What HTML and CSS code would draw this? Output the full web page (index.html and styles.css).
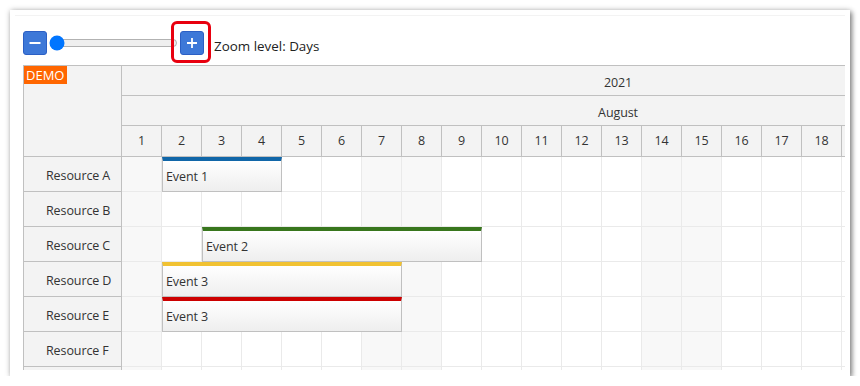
FILE: index.html
```html
<!DOCTYPE html>
<html>
<head>
<meta charset="utf-8">
<link rel="stylesheet" href="styles.css">
</head>
<body>
<div class="frame">
  <div class="inner">
    <div class="toolbar">
      <button class="zbtn" aria-label="Zoom out"><svg width="24" height="24" viewBox="0 0 24 24"><path d="M6.5 12h11" stroke="#fff" stroke-width="2"/></svg></button>
      <input class="slider" type="range" min="0" max="5" value="0">
      <button class="zbtn" aria-label="Zoom in"><svg width="24" height="24" viewBox="0 0 24 24"><path d="M7 12h10M12 7v10" stroke="#fff" stroke-width="1.8"/></svg></button>
      <span class="zlabel">Zoom level: Days</span>
      <div class="highlight"></div>
    </div>
    <div class="scheduler">
      <div class="left">
        <div class="corner"><span class="demo">DEMO</span></div>
        <div class="rh">Resource A</div>
        <div class="rh">Resource B</div>
        <div class="rh">Resource C</div>
        <div class="rh">Resource D</div>
        <div class="rh">Resource E</div>
        <div class="rh">Resource F</div>
        <div class="rh"></div>
      </div>
      <div class="timeline">
        <div class="th th-group"><div class="th-wide">2021</div></div>
        <div class="th th-group"><div class="th-wide">August</div></div>
        <div class="th th-days">
          <div class="day">1</div><div class="day">2</div><div class="day">3</div><div class="day">4</div><div class="day">5</div><div class="day">6</div><div class="day">7</div><div class="day">8</div><div class="day">9</div><div class="day">10</div><div class="day">11</div><div class="day">12</div><div class="day">13</div><div class="day">14</div><div class="day">15</div><div class="day">16</div><div class="day">17</div><div class="day">18</div><div class="day"></div>
        </div>
        <div class="grid" id="grid"></div>
      </div>
    </div>
  </div>
</div>
<script>
(function(){
  var grid = document.getElementById('grid');
  var weekend = {1:1,7:1,8:1,14:1,15:1};
  var events = {
    0: [{l:40,w:120,c:'#1066a8',t:'Event 1'}],
    2: [{l:80,w:280,c:'#38761d',t:'Event 2'}],
    3: [{l:40,w:240,c:'#f1c232',t:'Event 3'}],
    4: [{l:40,w:240,c:'#cc0000',t:'Event 3'}]
  };
  for (var r = 0; r < 7; r++) {
    var row = document.createElement('div');
    row.className = 'row';
    for (var d = 1; d <= 19; d++) {
      var c = document.createElement('div');
      c.className = 'cell' + (weekend[d] ? ' weekend' : '');
      row.appendChild(c);
    }
    (events[r] || []).forEach(function(e){
      var ev = document.createElement('div');
      ev.className = 'event';
      ev.style.left = e.l + 'px';
      ev.style.width = e.w + 'px';
      ev.style.borderTopColor = e.c;
      ev.textContent = e.t;
      row.appendChild(ev);
    });
    grid.appendChild(row);
  }
})();
</script>
</body>
</html>
```
FILE: styles.css
```css
html, body {
  margin: 0;
  padding: 0;
  background: #fff;
}
body {
  font-family: "Segoe UI", "Open Sans", "Noto Sans", sans-serif;
  color: #333;
}
.frame {
  margin: 10px 0 0 10px;
  width: 840px;
  height: 366px;
  background: #fff;
  box-shadow: 2px 2px 5px rgba(0,0,0,0.45), 0 0 6px rgba(0,0,0,0.18);
  overflow: hidden;
}
.inner {
  margin: 5px 0 0 5px;
  width: 830px;
  border-top: 1px solid #f3f3f3;
  padding: 15px 0 0 8px;
  box-sizing: border-box;
}
.toolbar {
  position: relative;
  display: flex;
  align-items: center;
  height: 24px;
}
.zbtn {
  width: 24px;
  height: 24px;
  padding: 0;
  margin: 0;
  border: 1px solid #2b5fc4;
  border-radius: 3px;
  background: #3d78d8;
  display: flex;
  align-items: center;
  justify-content: center;
}
.zbtn svg { display: block; margin: -1px; }
.slider {
  width: 129px;
  margin: 2px;
}
.zlabel {
  margin-left: 10px;
  font-size: 13.4px;
  padding-top: 5px;
  color: #222;
}
.highlight {
  position: absolute;
  left: 148px;
  top: -10px;
  width: 34px;
  height: 36px;
  border: 3px solid #e8000f;
  border-radius: 6px;
}
.scheduler {
  margin-top: 10px;
  width: 822px;
  height: 305px;
  border-left: 1px solid #c0c0c0;
  border-top: 1px solid #c0c0c0;
  box-sizing: border-box;
  display: flex;
  overflow: hidden;
  font-size: 12.5px;
  letter-spacing: -0.1px;
}
.left {
  width: 97px;
  flex: none;
  border-right: 1px solid #c0c0c0;
  background: #f3f3f3;
}
.corner {
  position: relative;
  height: 90px;
  border-bottom: 1px solid #c0c0c0;
}
.demo {
  position: absolute;
  left: 0;
  top: 0;
  background: #ff6600;
  color: #fff;
  font-size: 13px;
  letter-spacing: 0;
  line-height: 18px;
  padding: 0 3px 0 2px;
}
.rh {
  height: 34px;
  box-sizing: border-box;
  height: 35px;
  border-bottom: 1px solid #c0c0c0;
  padding: 2px 0 0 22px;
  display: flex;
  align-items: center;
}
.timeline {
  flex: 1;
  overflow: hidden;
}
.th {
  background: #f3f3f3;
  border-bottom: 1px solid #c0c0c0;
  height: 29px;
}
.th-wide {
  width: 992px;
  text-align: center;
  line-height: 29px;
  padding-top: 2px;
}
.th-days {
  display: flex;
  height: 30px;
}
.day {
  flex: none;
  width: 39px;
  border-right: 1px solid #c0c0c0;
  text-align: center;
  line-height: 30px;
}
.row {
  position: relative;
  display: flex;
  height: 35px;
}
.cell {
  flex: none;
  width: 39px;
  height: 34px;
  border-right: 1px solid #eaeaea;
  border-bottom: 1px solid #eaeaea;
  background: #fff;
}
.cell.weekend {
  background: #f8f8f8;
}
.event {
  position: absolute;
  top: 0;
  height: 35px;
  box-sizing: border-box;
  border: 1px solid #c0c0c0;
  border-top: 4px solid #1066a8;
  background: linear-gradient(#ffffff, #eeeeee);
  padding: 1px 0 0 3px;
  line-height: 29px;
  white-space: nowrap;
}
```
